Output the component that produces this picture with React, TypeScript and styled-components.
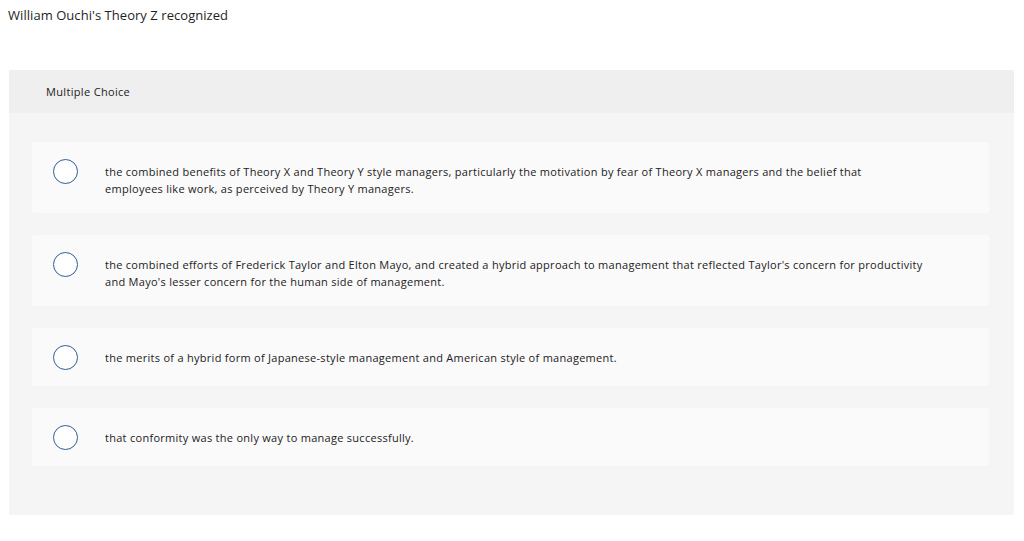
import React from "react";
import styled, { createGlobalStyle } from "styled-components";

const Global = createGlobalStyle`
  html, body { margin: 0; padding: 0; background: #ffffff; }
  body { font-family: "Open Sans", Lato, Arial, sans-serif; color: #222; }
`;

const Page = styled.div`
  padding: 7px 10px 0 9px;
`;

const Title = styled.div`
  font-size: 13px;
  line-height: 16px;
  letter-spacing: 0.05px;
  color: #1f1f1f;
  margin-left: -1px;
`;

const Panel = styled.section`
  margin-top: 47px;
  width: 1005px;
  background: #f5f5f5;
  border-radius: 2px;
  overflow: hidden;
`;

const Header = styled.div`
  height: 43px;
  background: #efefef;
  display: flex;
  align-items: center;
  padding-left: 37px;
  font-size: 11px;
  letter-spacing: 0.33px;
  color: #222;
`;

const List = styled.div`
  display: flex;
  flex-direction: column;
  gap: 22px;
  padding: 29px 25px 49px 23px;
`;

const Card = styled.label`
  display: flex;
  align-items: flex-start;
  background: #fafafa;
  border-radius: 3px;
  padding: 17px 20px 16px 21px;
  cursor: pointer;
`;

const Radio = styled.span`
  flex: none;
  width: 25px;
  height: 25px;
  box-sizing: border-box;
  border: 1px solid #2f5c9c;
  border-radius: 50%;
  background: #fff;
`;

const Text = styled.div`
  margin-left: 27px;
  padding-top: 4px;
  max-width: 840px;
  font-size: 11px;
  line-height: 17px;
  letter-spacing: 0.28px;
  white-space: pre-line;
  color: #222;
`;

const options = [
  "the combined benefits of Theory X and Theory Y style managers, particularly the motivation by fear of Theory X managers and the belief that\nemployees like work, as perceived by Theory Y managers.",
  "the combined efforts of Frederick Taylor and Elton Mayo, and created a hybrid approach to management that reflected Taylor's concern for productivity\nand Mayo's lesser concern for the human side of management.",
  "the merits of a hybrid form of Japanese-style management and American style of management.",
  "that conformity was the only way to manage successfully.",
];

export default function App() {
  return (
    <>
      <Global />
      <Page>
        <Title>William Ouchi's Theory Z recognized</Title>
        <Panel>
          <Header>Multiple Choice</Header>
          <List>
            {options.map((o) => (
              <Card key={o}>
                <Radio />
                <Text>{o}</Text>
              </Card>
            ))}
          </List>
        </Panel>
      </Page>
    </>
  );
}
